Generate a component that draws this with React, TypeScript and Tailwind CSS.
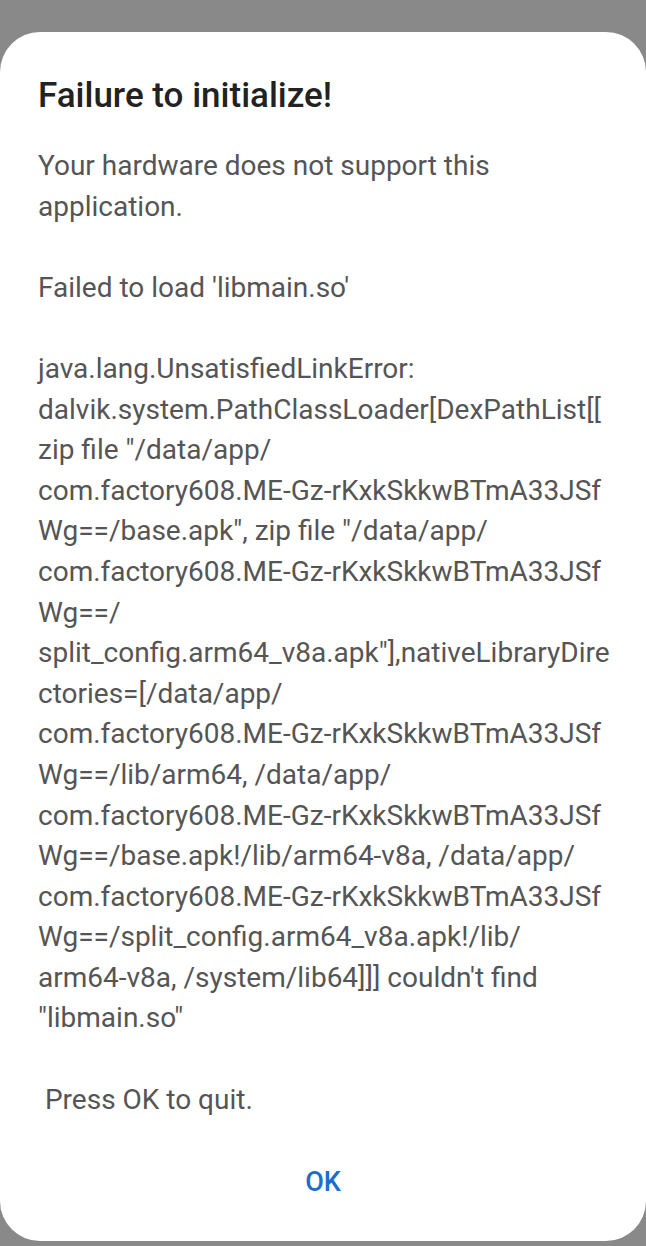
const lines = [
  'Your hardware does not support this',
  'application.',
  '',
  "Failed to load 'libmain.so'",
  '',
  'java.lang.UnsatisfiedLinkError:',
  'dalvik.system.PathClassLoader[DexPathList[[',
  'zip file "/data/app/',
  'com.factory608.ME-Gz-rKxkSkkwBTmA33JSf',
  'Wg==/base.apk", zip file "/data/app/',
  'com.factory608.ME-Gz-rKxkSkkwBTmA33JSf',
  'Wg==/',
  'split_config.arm64_v8a.apk"],nativeLibraryDire',
  'ctories=[/data/app/',
  'com.factory608.ME-Gz-rKxkSkkwBTmA33JSf',
  'Wg==/lib/arm64, /data/app/',
  'com.factory608.ME-Gz-rKxkSkkwBTmA33JSf',
  'Wg==/base.apk!/lib/arm64-v8a, /data/app/',
  'com.factory608.ME-Gz-rKxkSkkwBTmA33JSf',
  'Wg==/split_config.arm64_v8a.apk!/lib/',
  "arm64-v8a, /system/lib64]]] couldn't find",
  '"libmain.so"',
  '',
  ' Press OK to quit.',
];

export default function App() {
  return (
    <div className="min-h-[1246px] bg-[#898989] pt-[32px] pb-[5px] font-['Roboto',sans-serif]">
      <div className="bg-white rounded-[40px] px-[38px] pt-[44px]">
        {/* Title */}
        <h1 className="text-[35px] leading-[40px] font-medium text-[#222222]">
          Failure to initialize!
        </h1>

        {/* Message body */}
        <div className="mt-[30px] text-[28px] leading-[40.6px] text-[#555555]">
          {lines.map((line, i) => (
            <div key={i} className="whitespace-pre h-[40.6px]">
              {line}
            </div>
          ))}
        </div>

        {/* Action */}
        <div className="flex justify-center pt-[42px] pb-[39px]">
          <button className="text-[27px] leading-[40px] font-medium text-[#1b6dd0] px-6">
            OK
          </button>
        </div>
      </div>
    </div>
  );
}
